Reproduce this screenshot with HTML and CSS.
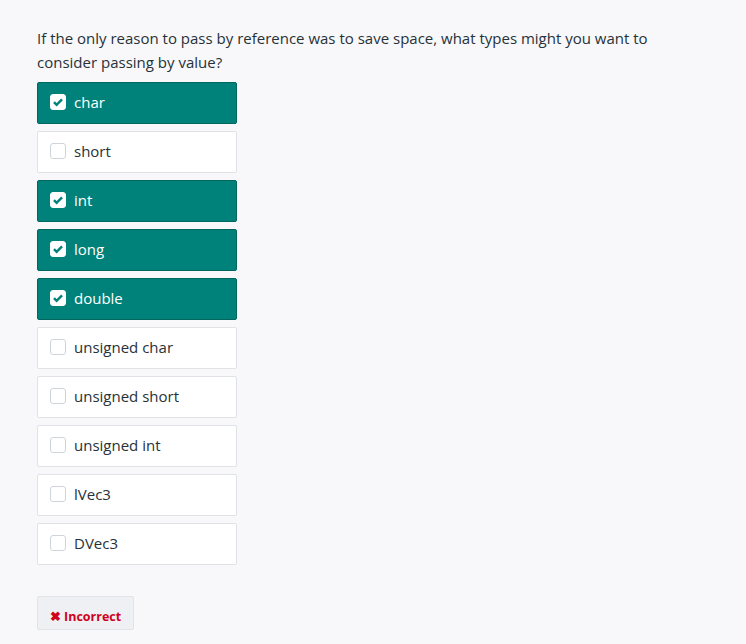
FILE: index.html
```html
<!DOCTYPE html>
<html lang="en">
<head>
    <meta charset="UTF-8">
    <title>Quiz</title>
    <link rel="stylesheet" href="styles.css">
</head>
<body>
    <div class="question">
        <p class="prompt">If the only reason to pass by reference was to save space, what types might you want to consider passing by value?</p>
        <div class="options">
            <label class="option checked"><span class="box"><svg viewBox="0 0 16 16"><path d="M3.4 8.2l3 3L12.6 5" fill="none" stroke="#00827a" stroke-width="2.8"/></svg></span>char</label>
            <label class="option"><span class="box"></span>short</label>
            <label class="option checked"><span class="box"><svg viewBox="0 0 16 16"><path d="M3.4 8.2l3 3L12.6 5" fill="none" stroke="#00827a" stroke-width="2.8"/></svg></span>int</label>
            <label class="option checked"><span class="box"><svg viewBox="0 0 16 16"><path d="M3.4 8.2l3 3L12.6 5" fill="none" stroke="#00827a" stroke-width="2.8"/></svg></span>long</label>
            <label class="option checked"><span class="box"><svg viewBox="0 0 16 16"><path d="M3.4 8.2l3 3L12.6 5" fill="none" stroke="#00827a" stroke-width="2.8"/></svg></span>double</label>
            <label class="option"><span class="box"></span>unsigned char</label>
            <label class="option"><span class="box"></span>unsigned short</label>
            <label class="option"><span class="box"></span>unsigned int</label>
            <label class="option"><span class="box"></span>lVec3</label>
            <label class="option"><span class="box"></span>DVec3</label>
        </div>
        <button class="result">&#10006; Incorrect</button>
    </div>
</body>
</html>
```

FILE: styles.css
```css
* {
    box-sizing: border-box;
    margin: 0;
    padding: 0;
}
body {
    font-family: "Open Sans", Lato, sans-serif;
    background: #f8f8fa;
    color: #263238;
    padding: 26px 37px;
}
.prompt {
    font-size: 15px;
    line-height: 24px;
    max-width: 660px;
    margin-bottom: 8px;
}
.options {
    display: flex;
    flex-direction: column;
    gap: 7px;
    width: 200px;
}
.option {
    display: flex;
    align-items: center;
    height: 42px;
    padding: 0 12px 2px;
    font-size: 15px;
    background: #fff;
    border: 1px solid #dfe2e7;
    border-radius: 2px;
}
.option.checked {
    background: #00827a;
    border-color: #00665f;
    color: #fff;
}
.box {
    width: 16px;
    height: 16px;
    margin-right: 8px;
    border: 1px solid #cfd4da;
    border-radius: 3px;
    background: #fff;
    display: flex;
    flex-shrink: 0;
}
.checked .box {
    border-color: #fff;
}
.box svg {
    width: 14px;
    height: 14px;
}
.result {
    margin-top: 31px;
    width: 97px;
    height: 34px;
    padding-top: 6px;
    font-family: inherit;
    font-size: 12.5px;
    font-weight: bold;
    color: #d0021b;
    background: #eff0f3;
    border: 1px solid #e1e3e8;
    border-radius: 2px;
}
```
